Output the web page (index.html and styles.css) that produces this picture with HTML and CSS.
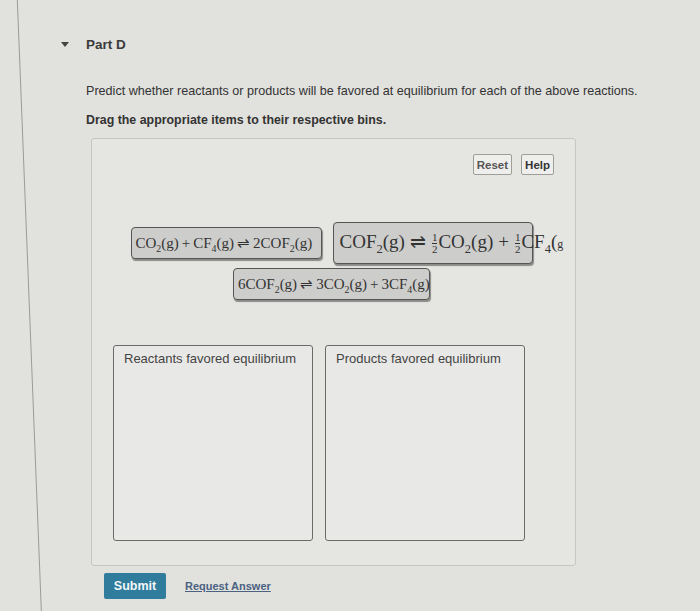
FILE: index.html
```html
<!DOCTYPE html>
<html>
<head>
<meta charset="utf-8">
<link rel="stylesheet" href="styles.css">
</head>
<body>
<div class="edge"></div>
<div class="page">
  <div class="header">
    <span class="caret"></span>
    <span class="part">Part D</span>
  </div>
  <p class="prompt">Predict whether reactants or products will be favored at equilibrium for each of the above reactions.</p>
  <p class="instr">Drag the appropriate items to their respective bins.</p>

  <div class="board">
    <div class="tools">
      <button class="btn reset">Reset</button>
      <button class="btn help">Help</button>
    </div>

    <div class="chips">
      <div class="chip c1"><span class="eq">CO<sub>2</sub>(g)<span class="op">+</span>CF<sub>4</sub>(g)<span class="op">⇌</span>2COF<sub>2</sub>(g)</span></div>
      <div class="chip c2"><span class="eq c2text">COF<sub>2</sub>(g)<span class="op">⇌</span><span class="frac"><span>1</span><span class="den">2</span></span>CO<sub>2</sub>(g)<span class="op">+</span><span class="frac"><span>1</span><span class="den">2</span></span>CF<sub>4</sub>(<span class="tiny">g</span></span></div>
    </div>
    <div class="chips row2">
      <div class="chip c3"><span class="eq">6COF<sub>2</sub>(g)<span class="op">⇌</span>3CO<sub>2</sub>(g)<span class="op">+</span>3CF<sub>4</sub>(g)</span></div>
    </div>

    <div class="bins">
      <div class="bin">Reactants favored equilibrium</div>
      <div class="bin">Products favored equilibrium</div>
    </div>
  </div>

  <div class="actions">
    <button class="submit">Submit</button>
    <a class="request" href="#">Request Answer</a>
  </div>
</div>
</body>
</html>
```

FILE: styles.css
```css
html, body {
  margin: 0;
  padding: 0;
}
body {
  background: #e1e1de;
  font-family: "Liberation Sans", Arial, sans-serif;
  color: #333;
  width: 700px;
  height: 611px;
  overflow: hidden;
  position: relative;
}
.edge {
  position: absolute;
  left: 29px;
  top: -10px;
  width: 1px;
  height: 640px;
  background: #9a9a9a;
  transform: rotate(-2.25deg);
  transform-origin: center;
}
.page {
  padding-left: 86px;
}
.header {
  padding-top: 35px;
  height: 18px;
  display: flex;
  align-items: center;
  position: relative;
}
.caret {
  position: absolute;
  left: -25px;
  top: 42px;
  width: 0;
  height: 0;
  border-left: 4px solid transparent;
  border-right: 4px solid transparent;
  border-top: 5px solid #444;
}
.part {
  font-weight: bold;
  font-size: 13.5px;
  color: #3a3a3a;
}
.prompt {
  margin: 30px 0 0 0;
  font-size: 12.6px;
  line-height: 16px;
  color: #333;
  white-space: nowrap;
}
.instr {
  margin: 13px 0 0 0;
  font-size: 12.4px;
  line-height: 16px;
  font-weight: bold;
  color: #333;
}
.board {
  margin: 10px 0 0 5px;
  width: 485px;
  box-sizing: border-box;
  border: 1px solid #c6c6c2;
  border-radius: 3px;
  background: #e5e5e2;
  padding: 15px 21px 24px 21px;
}
.tools {
  display: flex;
  justify-content: flex-end;
  gap: 9px;
}
.btn {
  height: 21px;
  padding: 0 3px;
  border: 1px solid #9d9d9a;
  border-radius: 2px;
  background: #eeeeec;
  font-family: "Liberation Sans", Arial, sans-serif;
  font-weight: bold;
  font-size: 11.5px;
  color: #555;
}
.help {
  color: #333;
}
.chips {
  margin-top: 47px;
  display: flex;
  justify-content: center;
  align-items: center;
  gap: 11px;
  padding-right: 4px;
}
.chips.row2 {
  margin-top: 4px;
}
.chip {
  box-sizing: border-box;
  border: 1px solid #555;
  border-radius: 4px;
  background: #cdcdcb;
  box-shadow: 1px 2px 1px #8a8a88;
  font-family: "Liberation Serif", "Times New Roman", serif;
  color: #333;
  white-space: nowrap;
  display: flex;
  align-items: center;
}
.eq {
  line-height: 20px;
}
.eq sub {
  font-size: 0.66em;
  vertical-align: sub;
  line-height: 1;
}
.op {
  margin: 0 3px;
}
.c1 {
  width: 191px;
  height: 32px;
  padding-left: 4px;
  font-size: 15px;
}
.c2 {
  width: 200px;
  height: 42px;
  padding-left: 6px;
  font-size: 19px;
  overflow: visible;
}
.c2 .op {
  margin: 0 5px;
}
.c2text {
  line-height: 26px;
}
.frac {
  display: inline-flex;
  flex-direction: column;
  align-items: center;
  vertical-align: middle;
  font-size: 11px;
  line-height: 11px;
  margin: 0 1px;
}
.frac .den {
  border-top: 1px solid #333;
}
.tiny {
  font-size: 12px;
}
.c3 {
  width: 197px;
  height: 32px;
  padding-left: 4px;
  font-size: 15px;
}
.bins {
  margin-top: 45px;
  display: flex;
  gap: 12px;
}
.bin {
  width: 200px;
  height: 196px;
  box-sizing: border-box;
  border: 1px solid #6a6a68;
  border-radius: 3px;
  background: #e8e8e6;
  padding: 5px 10px;
  font-size: 13px;
  color: #444;
}
.actions {
  margin: 7px 0 0 18px;
  display: flex;
  align-items: center;
  gap: 19px;
}
.submit {
  width: 62px;
  height: 26px;
  border: none;
  border-radius: 2px;
  background: #2f7c9c;
  color: #f2f6f8;
  font-family: "Liberation Sans", Arial, sans-serif;
  font-weight: bold;
  font-size: 12.5px;
}
.request {
  font-size: 11px;
  font-weight: bold;
  color: #4a6280;
  text-decoration: underline;
}
```
